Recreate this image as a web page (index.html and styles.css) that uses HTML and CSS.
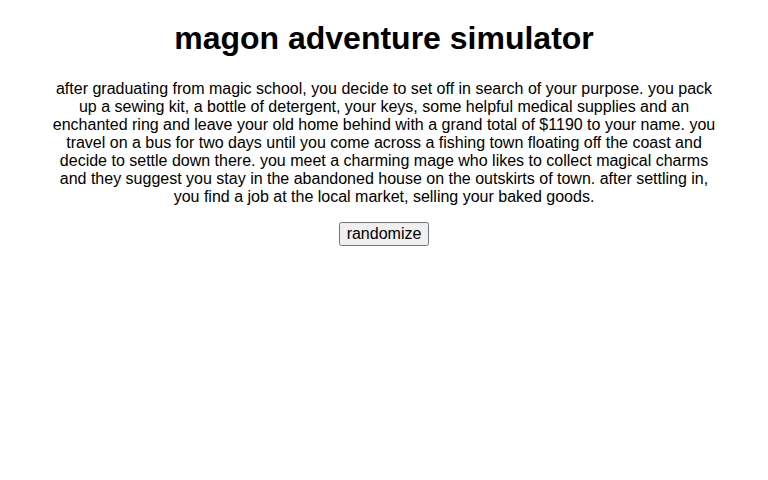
FILE: index.html
```html
<!DOCTYPE html>
<html lang="en">
<head>
  <meta charset="UTF-8" />
  <meta name="viewport" content="width=device-width, initial-scale=1.0" />
  <title>magon adventure simulator</title>
  <link rel="stylesheet" href="styles.css">
</head>
<body>
  <!-- Story generator -->
  <div class="page">
    <h1>magon adventure simulator</h1>
    <p id="story" class="story">after graduating from magic school, you decide to set off in search of your purpose. you pack up a sewing kit, a bottle of detergent, your keys, some helpful medical supplies and an enchanted ring and leave your old home behind with a grand total of $1190 to your name. you travel on a bus for two days until you come across a fishing town floating off the coast and decide to settle down there. you meet a charming mage who likes to collect magical charms and they suggest you stay in the abandoned house on the outskirts of town. after settling in, you find a job at the local market, selling your baked goods.</p>
    <button class="random-btn">randomize</button>
  </div>
</body>
</html>
```

FILE: styles.css
```css
/* Global Styles */
body {
  font-family: "Liberation Sans", Arial, sans-serif;
  margin: 0;
  padding: 0;
  background: #fff;
  color: #000;
}
.page {
  max-width: 670px;
  margin: 0 auto;
  padding: 0 20px;
  text-align: center;
}
h1 {
  font-size: 32px;
  margin: 20px 0 0;
  line-height: 37px;
}
.story {
  font-size: 16px;
  line-height: 18px;
  margin: 23px 0 16px;
}
.random-btn {
  font-family: inherit;
  font-size: 16px;
  padding: 1px 6px;
}
```
